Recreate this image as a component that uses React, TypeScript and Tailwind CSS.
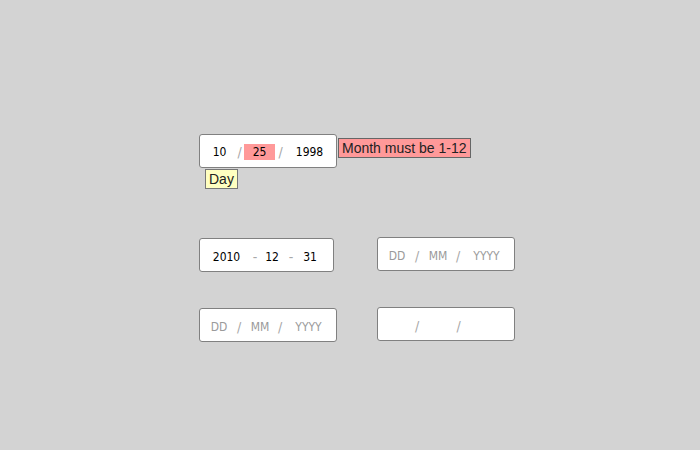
import React from "react";

type Part = { text?: string; width: number; sep?: boolean; error?: boolean; placeholder?: boolean };

const fieldFont = { fontFamily: '"DejaVu Sans Condensed", "DejaVu Sans", Verdana, sans-serif' };

function DateBox({
  parts,
  className = "pt-[2px]",
  boxWidth = 138,
}: {
  parts: Part[];
  className?: string;
  boxWidth?: number;
}) {
  return (
    <div
      className={`flex h-[34px] items-center rounded-[3px] border border-[#808080] bg-white pl-[4px] ${className}`}
      style={{ width: boxWidth }}
    >
      {parts.map((p, i) =>
        p.sep ? (
          <span
            key={i}
            className="flex h-[16px] items-center justify-center text-[14px] leading-none text-[#a8a8a8]"
            style={{ width: p.width, ...fieldFont }}
          >
            {p.text}
          </span>
        ) : (
          <span
            key={i}
            className={`flex h-[16px] items-center justify-center text-[12px] leading-none ${
              p.error ? "bg-[#ff9999]" : ""
            } ${p.placeholder ? "text-[#9a9a9a]" : "text-black"}`}
            style={{ width: p.width, ...fieldFont }}
          >
            {p.text}
          </span>
        )
      )}
    </div>
  );
}

const dmyEmpty: Part[] = [
  { width: 30 },
  { text: "/", width: 10, sep: true },
  { width: 32 },
  { text: "/", width: 9, sep: true },
  { width: 49 },
];

const dmyPlaceholder: Part[] = [
  { text: "DD", width: 30, placeholder: true },
  { text: "/", width: 10, sep: true },
  { text: "MM", width: 32, placeholder: true },
  { text: "/", width: 8, sep: true },
  { text: "YYYY", width: 49, placeholder: true },
];

export default function App() {
  return (
    <div
      className="min-h-[450px] w-full bg-[#d3d3d3] pl-[199px] pt-[134px]"
      style={{ fontFamily: '"Liberation Sans", Arial, sans-serif' }}
    >
      {/* first field with error + tooltip */}
      <div className="relative flex items-start">
        <DateBox
          parts={[
            { text: "10", width: 31 },
            { text: "/", width: 9, sep: true },
            { text: "25", width: 31, error: true },
            { text: "/", width: 11, sep: true },
            { text: "1998", width: 47 },
          ]}
        />
        <span className="ml-[1px] mt-[4px] border border-[#666] bg-[#ff9999] px-[3px] text-[14px] leading-[18px] text-[#222]">
          Month must be 1-12
        </span>
        <span className="absolute left-[6px] top-[35px] border border-[#777] bg-[#ffffc0] px-[3px] text-[14px] leading-[18px] text-[#222]">
          Day
        </span>
      </div>

      <div className="mt-[69px] grid grid-cols-[178px_auto] items-start">
        <DateBox
          className="mt-[1px] pt-[4px]"
          boxWidth={135}
          parts={[
            { text: "2010", width: 45 },
            { text: "-", width: 12, sep: true },
            { text: "12", width: 22 },
            { text: "-", width: 16, sep: true },
            { text: "31", width: 22 },
          ]}
        />
        <DateBox className="pt-[4px]" parts={dmyPlaceholder} />
      </div>

      <div className="mt-[35px] grid grid-cols-[178px_auto] items-start">
        <DateBox className="mt-[1px] pt-[4px]" parts={dmyPlaceholder} />
        <DateBox className="pt-[4px]" parts={dmyEmpty} />
      </div>
    </div>
  );
}
